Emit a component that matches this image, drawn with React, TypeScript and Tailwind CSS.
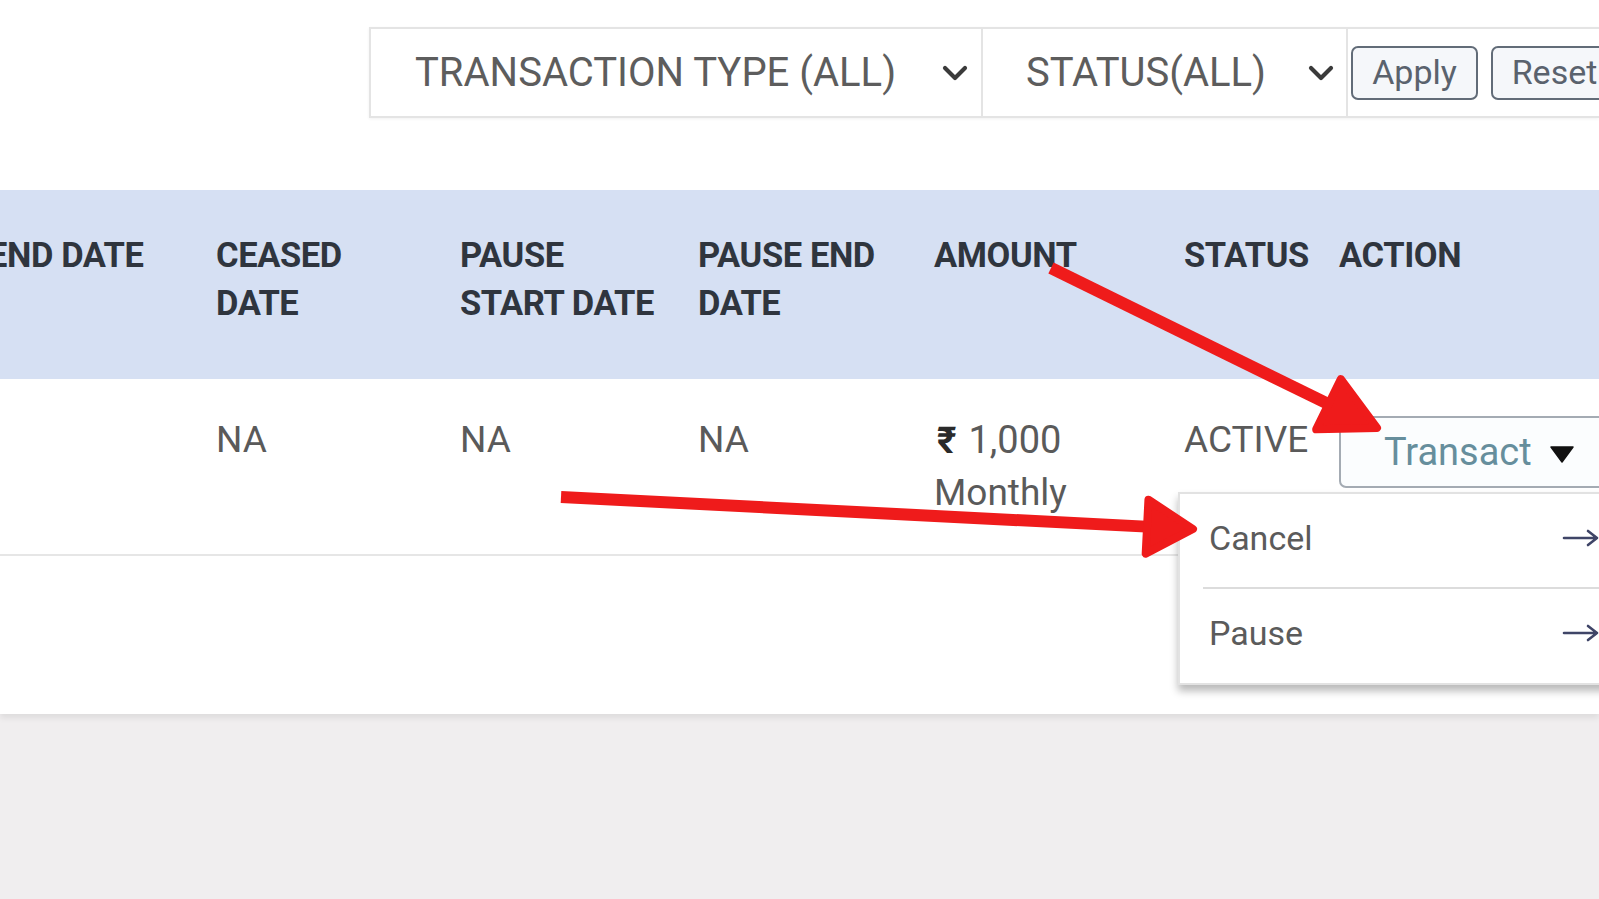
type Pt = [number, number];

function Arrow({ from, to, width, head, half }: { from: Pt; to: Pt; width: number; head: number; half: number }) {
  const dx = to[0] - from[0];
  const dy = to[1] - from[1];
  const len = Math.hypot(dx, dy);
  const ux = dx / len;
  const uy = dy / len;
  const bx = to[0] - ux * head;
  const by = to[1] - uy * head;
  const nx = -uy * half;
  const ny = ux * half;
  const tri = `${to[0]},${to[1]} ${bx + nx},${by + ny} ${bx - nx},${by - ny}`;
  return (
    <g>
      <line x1={from[0]} y1={from[1]} x2={bx + ux * 4} y2={by + uy * 4} stroke="#ef1b1b" strokeWidth={width} />
      <polygon points={tri} fill="#ef1b1b" stroke="#ef1b1b" strokeWidth={8} strokeLinejoin="round" />
    </g>
  );
}

function Chevron() {
  return (
    <svg width="26" height="18" viewBox="0 0 26 18" className="shrink-0">
      <polyline points="3,4 13,14 23,4" fill="none" stroke="#3a3a3a" strokeWidth="4.2" strokeLinecap="round" strokeLinejoin="round" />
    </svg>
  );
}

function RightArrow() {
  return (
    <svg width="38" height="20" viewBox="0 0 38 20" className="shrink-0">
      <path d="M2 10 H35 M26 3 L35 10 L26 17" fill="none" stroke="#3f4567" strokeWidth="2.6" strokeLinecap="round" strokeLinejoin="round" />
    </svg>
  );
}

const cols = 'grid grid-cols-[228px_244px_238px_236px_250px_155px_1fr]';

export default function App() {
  return (
    <div className="relative w-[1599px] h-[899px] overflow-hidden bg-[#f0eeef] font-['Roboto','Liberation_Sans',sans-serif]">
      <div className="bg-white shadow-[0_4px_6px_rgba(0,0,0,0.08)]">
        {/* filter bar */}
        <div className="h-[190px] pt-[27px] pl-[369px]">
          <div className="flex h-[91px] items-center border-2 border-r-0 border-[#e4e4e4] shadow-[0_1px_3px_rgba(0,0,0,0.06)]">
            <div className="flex h-full w-[612px] shrink-0 items-center justify-between border-r-2 border-[#e4e4e4] pl-[44px] pr-[13px]">
              <span className="text-[40px] text-[#5d5d5d]">TRANSACTION TYPE (ALL)</span>
              <Chevron />
            </div>
            <div className="flex h-full w-[365px] shrink-0 items-center justify-between border-r-2 border-[#e4e4e4] pl-[43px] pr-[12px]">
              <span className="text-[40px] text-[#5d5d5d]">STATUS(ALL)</span>
              <Chevron />
            </div>
            <div className="flex shrink-0 items-center gap-[13px] pl-[3px]">
              <button className="flex h-[54px] w-[127px] items-center justify-center rounded-[7px] border-[2.5px] border-[#626c78] bg-[#f5f7fa] text-[34px] text-[#5a626d]">
                Apply
              </button>
              <button className="flex h-[54px] w-[127px] items-center justify-center rounded-[7px] border-[2.5px] border-[#626c78] bg-[#f5f7fa] text-[34px] text-[#5a626d]">
                Reset
              </button>
            </div>
          </div>
        </div>

        {/* table */}
        <div className="h-[524px]">
          <div className="bg-[#d6e0f3]">
            <div className={`${cols} -ml-[12px] h-[189px] pt-[41px] text-[34.5px] font-bold leading-[48px] tracking-[-0.4px] text-[#2f353e]`}>
              <div>END DATE</div>
              <div>
                CEASED
                <br />
                DATE
              </div>
              <div>
                PAUSE
                <br />
                START DATE
              </div>
              <div>
                PAUSE END
                <br />
                DATE
              </div>
              <div>AMOUNT</div>
              <div>STATUS</div>
              <div>ACTION</div>
            </div>
          </div>
          <div className="border-b-2 border-[#e6e6e6]">
            <div className={`${cols} -ml-[12px] h-[175px] pt-[35px] text-[37px] leading-[52px] text-[#5a5a5a]`}>
              <div />
              <div>NA</div>
              <div>NA</div>
              <div>NA</div>
              <div>
                <span className="ml-[3px] font-bold text-[#2a2a2a]">₹</span>
                <span className="ml-[12px] text-[38px]">1,000</span>
                <br />
                Monthly
              </div>
              <div>ACTIVE</div>
              <div className="relative">
                <div className="mt-[2px] flex h-[72px] w-[300px] items-center rounded-[7px] border-2 border-[#a4abb3] bg-[#fbfdfe] pl-[43px]">
                  <span className="text-[38px] text-[#668e9c]">Transact</span>
                  <svg width="24" height="17" viewBox="0 0 24 17" className="ml-[18px] mt-[4px] shrink-0">
                    <polygon points="1,1 23,1 12,16" fill="#111" stroke="#111" strokeWidth="1.5" strokeLinejoin="round" />
                  </svg>
                </div>
                <div className="absolute left-[-161px] top-[78px] z-10 w-[432px] border-2 border-r-0 border-[#e2e2e2] bg-white text-[34px] text-[#5b5b5b] shadow-[0_6px_8px_rgba(0,0,0,0.28)]">
                  <div className="flex h-[93px] items-center justify-between pb-[6px] pl-[29px] pr-[10px]">
                    <span>Cancel</span>
                    <RightArrow />
                  </div>
                  <div className="ml-[23px] h-[2px] bg-[#dcdcdc]" />
                  <div className="flex h-[94px] items-center justify-between pb-[6px] pl-[29px] pr-[10px]">
                    <span>Pause</span>
                    <RightArrow />
                  </div>
                </div>
              </div>
            </div>
          </div>
        </div>
      </div>

      <svg className="pointer-events-none absolute inset-0 z-20" width="1599" height="899" viewBox="0 0 1599 899">
        <Arrow from={[1051, 268]} to={[1377, 428]} width={12} head={54} half={28} />
        <Arrow from={[561, 497]} to={[1193, 529]} width={12} head={46} half={27} />
      </svg>
    </div>
  );
}
